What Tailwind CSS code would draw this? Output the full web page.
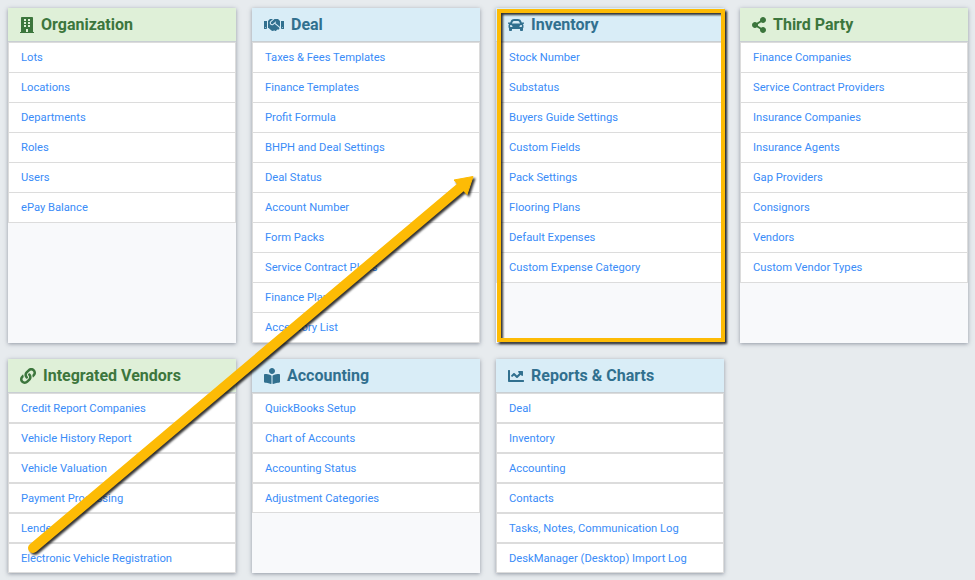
<!DOCTYPE html>
<html lang="en">
<head>
    <meta charset="UTF-8">
    <meta name="viewport" content="width=device-width, initial-scale=1.0">
    <title>Settings</title>
    <script src="https://cdn.jsdelivr.net/npm/@tailwindcss/browser@4"></script>
</head>
<body class="relative w-[975px] h-[580px] overflow-hidden bg-[#e7ebee] font-['Roboto',sans-serif] text-[11.2px] text-[#3a8cf8]">

    <main class="grid grid-cols-[repeat(4,228px)] grid-rows-[335px_214px] gap-4 p-2">

        <!-- Organization -->
        <section class="bg-[#f8f9fb] shadow-[0_1px_4px_rgba(60,70,90,0.5)]">
            <h2 class="flex h-[34px] items-center gap-[7px] border-b border-[#c9cfd3] bg-[#dff0d8] pl-3 text-base font-bold text-[#3c763d]">
                <svg class="h-4 w-3.5" viewBox="0 0 448 512" fill="currentColor"><path fill-rule="evenodd" d="M436 480h-20V24c0-13.300-10.700-24-24-24H56C42.700 0 32 10.700 32 24v456H12c-6.600 0-12 5.400-12 12v20h448v-20c0-6.600-5.400-12-12-12zM128 64h64v64h-64zM128 160h64v64h-64zM128 256h64v64h-64zM256 64h64v64h-64zM256 160h64v64h-64zM256 256h64v64h-64zM192 384h64v96h-64z"/></svg>
                <span>Organization</span>
            </h2>
            <ul class="border-x border-t border-[#dcdcdc] [&>li]:flex [&>li]:h-[30px] [&>li]:items-center [&>li]:border-b [&>li]:border-[#dcdcdc] [&>li]:bg-white [&>li]:pt-0.5 [&>li]:pl-3">
                <li><a href="#">Lots</a></li>
                <li><a href="#">Locations</a></li>
                <li><a href="#">Departments</a></li>
                <li><a href="#">Roles</a></li>
                <li><a href="#">Users</a></li>
                <li><a href="#">ePay Balance</a></li>
            </ul>
        </section>

        <!-- Deal -->
        <section class="bg-[#f8f9fb] shadow-[0_1px_4px_rgba(60,70,90,0.5)]">
            <h2 class="flex h-[34px] items-center gap-[7px] border-b border-[#c9cfd3] bg-[#d9edf7] pl-3 text-base font-bold text-[#31708f]">
                <svg class="h-4 w-5" viewBox="0 0 640 512" fill="currentColor"><path d="M434.700 64h-85.900c-8 0-15.700 3-21.600 8.400l-98.300 90c-.1.1-.2.3-.3.4-16.600 15.600-16.300 40.500-2.100 56 12.700 13.900 39.400 17.600 56.100 2.700.1-.1.3-.1.4-.2l79.900-73.200c6.500-5.900 16.700-5.500 22.600 1 6 6.500 5.500 16.600-1 22.600l-26.100 23.900L504 313.800c2.900 2.400 5.500 5 7.900 7.700V128l-54.600-54.600c-5.900-6-14.100-9.400-22.600-9.400zM544 128.200v223.900c0 17.700 14.300 32 32 32h64V128.200h-96zm48 223.900c-8.800 0-16-7.200-16-16s7.200-16 16-16 16 7.200 16 16-7.200 16-16 16zM0 384h64c17.700 0 32-14.300 32-32V128.200H0V384zm48-63.900c8.800 0 16 7.200 16 16s-7.200 16-16 16-16-7.200-16-16c0-8.900 7.200-16 16-16zm435.900 18.600L334.600 217.500l-30 27.500c-29.700 27.100-75.200 24.500-101.700-4.400-26.900-29.400-24.800-74.900 4.400-101.700L289.100 64h-83.800c-8.500 0-16.600 3.400-22.600 9.400L128 128v223.900h18.300l90.500 81.900c27.400 22.300 67.700 18.100 90-9.300l.2-.2 17.900 15.500c15.900 13 39.400 10.500 52.300-5.400l31.400-38.600 5.400 4.400c13.700 11.100 33.900 9.100 45-4.700l9.500-11.700c11.200-13.800 9.100-33.900-4.600-45.100z"/></svg>
                <span>Deal</span>
            </h2>
            <ul class="border-x border-t border-[#dcdcdc] [&>li]:flex [&>li]:h-[30px] [&>li]:items-center [&>li]:border-b [&>li]:border-[#dcdcdc] [&>li]:bg-white [&>li]:pt-0.5 [&>li]:pl-3">
                <li><a href="#">Taxes &amp; Fees Templates</a></li>
                <li><a href="#">Finance Templates</a></li>
                <li><a href="#">Profit Formula</a></li>
                <li><a href="#">BHPH and Deal Settings</a></li>
                <li><a href="#">Deal Status</a></li>
                <li><a href="#">Account Number</a></li>
                <li><a href="#">Form Packs</a></li>
                <li><a href="#">Service Contract Plans</a></li>
                <li><a href="#">Finance Plans</a></li>
                <li><a href="#">Accessory List</a></li>
            </ul>
        </section>

        <!-- Inventory -->
        <section class="relative bg-[#f8f9fb] shadow-[0_1px_4px_rgba(60,70,90,0.5)]">
            <h2 class="flex h-[34px] items-center gap-[7px] border-b border-[#c9cfd3] bg-[#d9edf7] pl-3 text-base font-bold text-[#31708f]">
                <svg class="size-4" viewBox="0 0 512 512" fill="currentColor"><path d="M499.990 176h-59.870l-16.640-41.600C406.380 91.630 365.570 64 319.500 64h-127c-46.060 0-86.880 27.630-103.990 70.400L71.870 176H12.010C4.200 176-1.530 183.340.370 190.910l6 24C7.700 220.250 12.500 224 18.010 224h20.070C24.650 235.730 16 252.780 16 272v48c0 16.120 6.160 30.670 16 41.930V416c0 17.670 14.330 32 32 32h32c17.670 0 32-14.330 32-32v-32h256v32c0 17.670 14.330 32 32 32h32c17.670 0 32-14.330 32-32v-54.070c9.840-11.250 16-25.800 16-41.930v-48c0-19.220-8.650-36.270-22.070-48H494c5.510 0 10.310-3.750 11.640-9.090l6-24c1.890-7.570-3.840-14.910-11.650-14.910zm-352.060-17.830c7.290-18.220 24.940-30.170 44.570-30.170h127c19.630 0 37.280 11.950 44.570 30.170L384 208H128l19.930-49.830zM96 319.800c-19.200 0-32-12.760-32-31.900S76.800 256 96 256s48 28.710 48 47.850-28.800 15.950-48 15.950zm320 0c-19.200 0-48 3.190-48-15.950S396.800 256 416 256s32 12.760 32 31.900-12.800 31.900-32 31.900z"/></svg>
                <span>Inventory</span>
            </h2>
            <ul class="border-x border-t border-[#dcdcdc] [&>li]:flex [&>li]:h-[30px] [&>li]:items-center [&>li]:border-b [&>li]:border-[#dcdcdc] [&>li]:bg-white [&>li]:pt-0.5 [&>li]:pl-3">
                <li><a href="#">Stock Number</a></li>
                <li><a href="#">Substatus</a></li>
                <li><a href="#">Buyers Guide Settings</a></li>
                <li><a href="#">Custom Fields</a></li>
                <li><a href="#">Pack Settings</a></li>
                <li><a href="#">Flooring Plans</a></li>
                <li><a href="#">Default Expenses</a></li>
                <li><a href="#">Custom Expense Category</a></li>
            </ul>
            <!-- Highlight frame -->
            <div class="pointer-events-none absolute top-px left-px h-[333px] w-[228px] border-4 border-[#fdbb05] drop-shadow-[2px_2px_1px_rgba(0,0,0,0.8)]"></div>
        </section>

        <!-- Third Party -->
        <section class="bg-[#f8f9fb] shadow-[0_1px_4px_rgba(60,70,90,0.5)]">
            <h2 class="flex h-[34px] items-center gap-[7px] border-b border-[#c9cfd3] bg-[#dff0d8] pl-3 text-base font-bold text-[#3c763d]">
                <svg class="h-4 w-3.5" viewBox="0 0 448 512" fill="currentColor"><path d="M352 320c-22.608 0-43.387 7.819-59.790 20.895l-102.486-64.054a96.551 96.551 0 0 0 0-41.683l102.486-64.054C308.613 184.181 329.392 192 352 192c53.019 0 96-42.981 96-96S405.019 0 352 0s-96 42.981-96 96c0 7.158.790 14.130 2.276 20.841L155.790 180.895C139.387 167.819 118.608 160 96 160c-53.019 0-96 42.981-96 96s42.981 96 96 96c22.608 0 43.387-7.819 59.790-20.895l102.486 64.054A96.301 96.301 0 0 0 256 416c0 53.019 42.981 96 96 96s96-42.981 96-96-42.981-96-96-96z"/></svg>
                <span>Third Party</span>
            </h2>
            <ul class="border-x border-t border-[#dcdcdc] [&>li]:flex [&>li]:h-[30px] [&>li]:items-center [&>li]:border-b [&>li]:border-[#dcdcdc] [&>li]:bg-white [&>li]:pt-0.5 [&>li]:pl-3">
                <li><a href="#">Finance Companies</a></li>
                <li><a href="#">Service Contract Providers</a></li>
                <li><a href="#">Insurance Companies</a></li>
                <li><a href="#">Insurance Agents</a></li>
                <li><a href="#">Gap Providers</a></li>
                <li><a href="#">Consignors</a></li>
                <li><a href="#">Vendors</a></li>
                <li><a href="#">Custom Vendor Types</a></li>
            </ul>
        </section>

        <!-- Integrated Vendors -->
        <section class="bg-[#f8f9fb] shadow-[0_1px_4px_rgba(60,70,90,0.5)]">
            <h2 class="flex h-[34px] items-center gap-[7px] border-b border-[#c9cfd3] bg-[#dff0d8] pl-3 text-base font-bold text-[#3c763d]">
                <svg class="size-4" viewBox="0 0 512 512" fill="currentColor"><path d="M326.612 185.391c59.747 59.809 58.927 155.698.360 214.590-.110.120-.240.250-.360.370l-67.200 67.200c-59.270 59.270-155.699 59.262-214.960 0-59.270-59.260-59.270-155.700 0-214.960l37.106-37.106c9.840-9.840 26.786-3.300 27.294 10.606.648 17.722 3.826 35.527 9.690 52.721 1.986 5.822.567 12.262-3.783 16.612l-13.087 13.087c-28.026 28.026-28.905 73.660-1.155 101.960 28.024 28.579 74.086 28.749 102.325.510l67.200-67.190c28.191-28.191 28.073-73.757 0-101.830-3.701-3.694-7.429-6.564-10.341-8.569a16.037 16.037 0 0 1-6.947-12.606c-.396-10.567 3.348-21.456 11.698-29.806l21.054-21.055c5.521-5.521 14.182-6.199 20.584-1.731a152.482 152.482 0 0 1 20.522 17.197zM467.547 44.449c-59.261-59.262-155.690-59.270-214.960 0l-67.200 67.200c-.120.120-.250.250-.360.370-58.566 58.892-59.387 154.781.360 214.590a152.454 152.454 0 0 0 20.521 17.196c6.402 4.468 15.064 3.789 20.584-1.731l21.054-21.055c8.350-8.350 12.094-19.239 11.698-29.806a16.037 16.037 0 0 0-6.947-12.606c-2.912-2.005-6.640-4.875-10.341-8.569-28.073-28.073-28.191-73.639 0-101.830l67.200-67.190c28.239-28.239 74.300-28.069 102.325.510 27.750 28.300 26.872 73.934-1.155 101.960l-13.087 13.087c-4.350 4.350-5.769 10.790-3.783 16.612 5.864 17.194 9.042 34.999 9.690 52.721.509 13.906 17.454 20.446 27.294 10.606l37.106-37.106c59.271-59.259 59.271-155.699.001-214.959z"/></svg>
                <span>Integrated Vendors</span>
            </h2>
            <ul class="[&>li]:flex [&>li]:h-[30px] [&>li]:items-center [&>li]:border [&>li]:border-[#dcdcdc] [&>li]:bg-white [&>li]:pt-0.5 [&>li]:pl-3">
                <li><a href="#">Credit Report Companies</a></li>
                <li><a href="#">Vehicle History Report</a></li>
                <li><a href="#">Vehicle Valuation</a></li>
                <li><a href="#">Payment Processing</a></li>
                <li><a href="#">Lenders</a></li>
                <li><a href="#">Electronic Vehicle Registration</a></li>
            </ul>
        </section>

        <!-- Accounting -->
        <section class="bg-[#f8f9fb] shadow-[0_1px_4px_rgba(60,70,90,0.5)]">
            <h2 class="flex h-[34px] items-center gap-[7px] border-b border-[#c9cfd3] bg-[#d9edf7] pl-3 text-base font-bold text-[#31708f]">
                <svg class="size-4" viewBox="0 0 512 512" fill="currentColor"><path d="M352 96c0-53.020-42.980-96-96-96s-96 42.980-96 96 42.980 96 96 96 96-42.980 96-96zM233.590 241.100c-59.330-36.320-155.430-46.300-203.790-49.050C13.550 191.130 0 203.510 0 219.140v222.800c0 14.330 11.590 26.280 26.490 27.050 43.660 2.290 131.990 10.680 193.040 41.430 9.370 4.720 20.480-1.710 20.480-11.870V252.560c-.010-4.670-2.320-8.950-6.420-11.460zm248.610-49.050c-48.350 2.740-144.460 12.730-203.780 49.050-4.100 2.510-6.410 6.960-6.410 11.630v245.790c0 10.190 11.140 16.630 20.540 11.900 61.040-30.720 149.320-39.110 192.970-41.400 14.900-.780 26.490-12.730 26.490-27.060V219.140c-.010-15.630-13.560-28.010-29.810-27.090z"/></svg>
                <span>Accounting</span>
            </h2>
            <ul class="[&>li]:flex [&>li]:h-[30px] [&>li]:items-center [&>li]:border [&>li]:border-[#dcdcdc] [&>li]:bg-white [&>li]:pt-0.5 [&>li]:pl-3">
                <li><a href="#">QuickBooks Setup</a></li>
                <li><a href="#">Chart of Accounts</a></li>
                <li><a href="#">Accounting Status</a></li>
                <li><a href="#">Adjustment Categories</a></li>
            </ul>
        </section>

        <!-- Reports & Charts -->
        <section class="bg-[#f8f9fb] shadow-[0_1px_4px_rgba(60,70,90,0.5)]">
            <h2 class="flex h-[34px] items-center gap-[7px] border-b border-[#c9cfd3] bg-[#d9edf7] pl-3 text-base font-bold text-[#31708f]">
                <svg class="size-4" viewBox="0 0 512 512" fill="currentColor"><path d="M496 384H64V80c0-8.840-7.160-16-16-16H16C7.160 64 0 71.160 0 80v336c0 17.670 14.330 32 32 32h464c8.840 0 16-7.160 16-16v-32c0-8.840-7.160-16-16-16zM464 96H345.940c-21.380 0-32.090 25.850-16.970 40.970l32.400 32.400L288 242.750l-73.370-73.370c-12.500-12.500-32.760-12.500-45.250 0l-68.690 68.690c-6.250 6.250-6.250 16.380 0 22.630l22.620 22.620c6.250 6.250 16.380 6.250 22.630 0L192 237.250l73.370 73.370c12.500 12.500 32.760 12.500 45.250 0l96-96 32.400 32.400c15.120 15.120 40.970 4.410 40.970-16.970V112c.010-8.840-7.150-16-16-16z"/></svg>
                <span>Reports &amp; Charts</span>
            </h2>
            <ul class="[&>li]:flex [&>li]:h-[30px] [&>li]:items-center [&>li]:border [&>li]:border-[#dcdcdc] [&>li]:bg-white [&>li]:pt-0.5 [&>li]:pl-3">
                <li><a href="#">Deal</a></li>
                <li><a href="#">Inventory</a></li>
                <li><a href="#">Accounting</a></li>
                <li><a href="#">Contacts</a></li>
                <li><a href="#">Tasks, Notes, Communication Log</a></li>
                <li><a href="#">DeskManager (Desktop) Import Log</a></li>
            </ul>
        </section>
    </main>

    <!-- Arrow pointing at the Inventory card -->
    <svg class="pointer-events-none absolute inset-0 drop-shadow-[2px_2px_1px_rgba(0,0,0,0.8)]" width="975" height="580" viewBox="0 0 975 580" fill="#fdbb05">
        <path d="M33 548L461 187" stroke="#fdbb05" stroke-width="10" stroke-linecap="round"/>
        <path d="M473 176.500L454 180L467 194.500Z" stroke="#fdbb05" stroke-width="1" stroke-linejoin="round"/>
    </svg>

</body>
</html>
